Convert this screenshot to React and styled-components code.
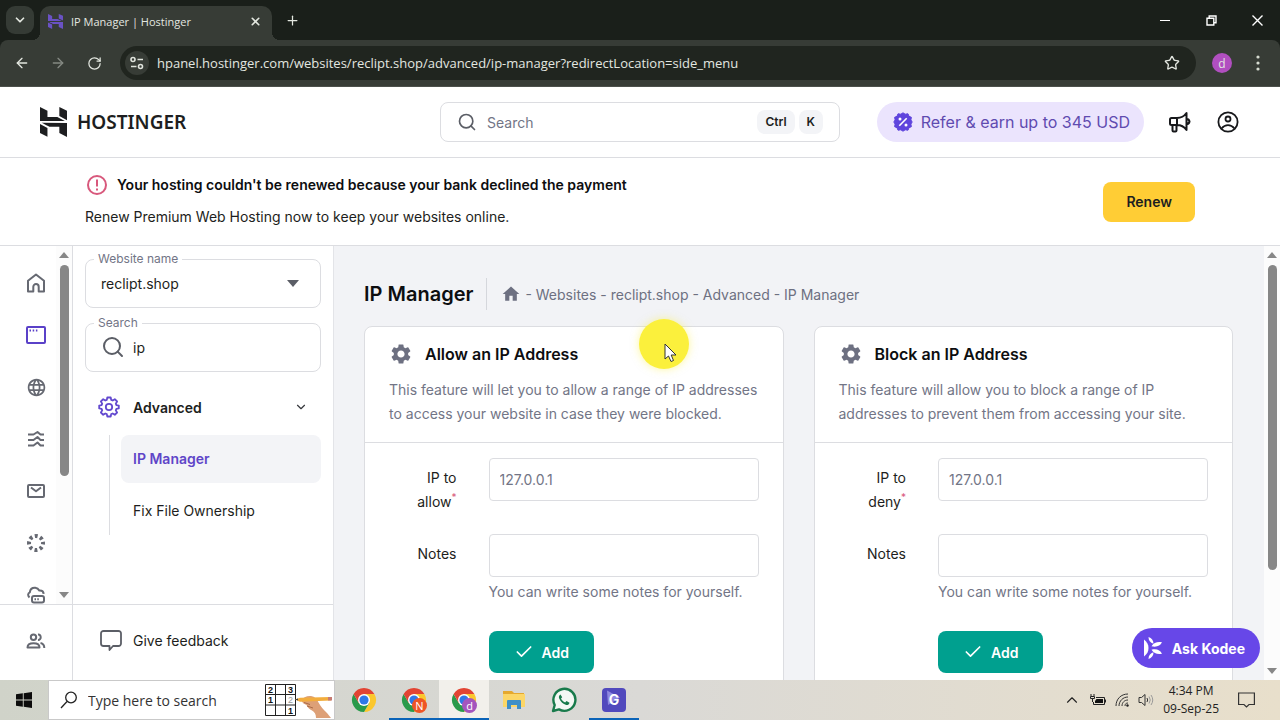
import React from 'react';
import styled, { createGlobalStyle, css } from 'styled-components';
import { MdSettings, MdHome, MdLanguage } from 'react-icons/md';
import {
  ArrowLeft,
  ArrowRight,
  Check,
  ChevronDown,
  ChevronUp,
  Plus,
  RotateCw,
  Search,
  Star,
  X,
} from 'lucide-react';

const uiFont = "Inter, 'Liberation Sans', sans-serif";
const systemFont = "'Open Sans', 'Noto Sans', sans-serif";

const cards = [
  {
    id: 'allow',
    title: 'Allow an IP Address',
    text:
      'This feature will let you to allow a range of IP addresses to access your website in case they were blocked.',
    label: 'IP to allow',
  },
  {
    id: 'deny',
    title: 'Block an IP Address',
    text:
      'This feature will allow you to block a range of IP addresses to prevent them from accessing your site.',
    label: 'IP to deny',
  },
];

function HostingerMark({ width, height, color }) {
  return (
    <svg width={width} height={height} viewBox="1.8 0 20.4 24" fill={color} preserveAspectRatio="none">
      <path d="M16.415 0v7.16l5.785 3.384V2.949L16.415 0ZM1.8 0v11.237h18.815L14.89 8.09l-7.457-.003V3.024L1.8 0Zm14.615 20.894v-5.019l-7.514-.005c.007.033-5.82-3.197-5.82-3.197l19.119.091V24l-5.785-3.106ZM1.8 13.551v7.343l5.633 2.949v-6.988L1.8 13.551Z" />
    </svg>
  );
}

function BrowserChrome() {
  return (
    <StyledBrowser>
      <TitleBar>
        <TabSearchButton aria-label="Search tabs">
          <ChevronDown size={14} strokeWidth={3} />
        </TabSearchButton>
        <Tab>
          <HostingerMark width={15} height={15} color="#6a52c4" />
          <TabTitle>IP Manager | Hostinger</TabTitle>
          <PlainButton aria-label="Close tab">
            <X size={13} strokeWidth={3} />
          </PlainButton>
        </Tab>
        <NewTabButton aria-label="New tab">
          <Plus size={15} strokeWidth={2} />
        </NewTabButton>
        <WindowControls>
          <WindowButton aria-label="Minimize">
            <svg width="10" height="10" stroke="#fff" fill="none">
              <path d="M0 5.5h10" />
            </svg>
          </WindowButton>
          <WindowButton aria-label="Restore">
            <svg width="11" height="11" stroke="#fff" fill="none" strokeWidth="1.4">
              <path d="M1 3.2h6.8V10H1zM3.2 3V1H10v6.8H8" />
            </svg>
          </WindowButton>
          <WindowButton aria-label="Close">
            <svg width="11" height="11" stroke="#fff" fill="none" strokeWidth="1.4">
              <path d="M.5.5l10 10M10.500.5l-10 10" />
            </svg>
          </WindowButton>
        </WindowControls>
      </TitleBar>
      <Toolbar>
        <ToolButton aria-label="Back">
          <ArrowLeft size={16} />
        </ToolButton>
        <ToolButton aria-label="Forward" $dim>
          <ArrowRight size={16} />
        </ToolButton>
        <ToolButton aria-label="Reload">
          <RotateCw size={15} />
        </ToolButton>
        <AddressBar>
          <SiteInfoButton aria-label="Site information">
            <svg width="14" height="14" viewBox="0 0 14 14" fill="none" stroke="#dfe3dc" strokeWidth="1.6">
              <circle cx="3" cy="3.5" r="2" />
              <path d="M7.5 3.5H13M1 10.5h5.5" />
              <circle cx="10.5" cy="10.5" r="2" />
            </svg>
          </SiteInfoButton>
          <AddressInput
            type="text"
            aria-label="Address"
            defaultValue="hpanel.hostinger.com/websites/reclipt.shop/advanced/ip-manager?redirectLocation=side_menu"
          />
          <PlainButton aria-label="Bookmark this tab">
            <Star size={16} strokeWidth={2} />
          </PlainButton>
        </AddressBar>
        <ProfileButton>d</ProfileButton>
        <ToolButton aria-label="Menu">
          <svg width="4" height="16" fill="#d5dbd0">
            <circle cx="2" cy="2" r="1.6" />
            <circle cx="2" cy="8" r="1.6" />
            <circle cx="2" cy="14" r="1.6" />
          </svg>
        </ToolButton>
      </Toolbar>
    </StyledBrowser>
  );
}

function Header() {
  return (
    <StyledHeader>
      <Logo href="#">
        <HostingerMark width={27} height={30} color="#1d1e20" />
        HOSTINGER
      </Logo>
      <HeaderSearch>
        <Search size={20} strokeWidth={2} color="#5b5e66" />
        <HeaderInput type="text" aria-label="Search" placeholder="Search" />
        <Key>Ctrl</Key>
        <Key>K</Key>
      </HeaderSearch>
      <HeaderActions>
        <ReferLink href="#">
          <svg width="20" height="20" viewBox="0 0 20 20">
            <path
              fill="#5f45dd"
              stroke="#5f45dd"
              strokeLinejoin="round"
              d="M10 .8l2.200 1.400L15 1.800l1 2.500 2.400 1-.5 2.600L19.200 10l-1.300 2.100.5 2.600-2.400 1-1 2.500-2.800-.4L10 19.200l-2.200-1.400-2.800.4-1-2.500-2.400-1 .5-2.600L.8 10l1.300-2.100-.5-2.600 2.400-1 1-2.500 2.800.4z"
            />
            <path d="M6.300 13.700l7.400-7.400" stroke="#fff" strokeWidth="1.6" />
            <circle cx="7" cy="7" r="1.5" fill="#fff" />
            <circle cx="13" cy="13" r="1.5" fill="#fff" />
          </svg>
          Refer &amp; earn up to 345 USD
        </ReferLink>
        <PlainButton aria-label="News">
          <svg width="24" height="24" viewBox="0 0 24 24" fill="none" stroke="#17181b" strokeWidth="2" strokeLinejoin="round">
            <path d="M9 8H3.500a1.500 1.500 0 0 0-1.500 1.500v4A1.500 1.500 0 0 0 3.500 15H9zM9 8c4 0 7-1.500 9.500-5v17c-2.500-3.500-5.500-5-9.500-5M4.500 15v5.500a1 1 0 0 0 1 1h2a1 1 0 0 0 1-1V15M18.500 9a3 3 0 0 1 3 2.500 3 3 0 0 1-3 2.500" />
          </svg>
        </PlainButton>
        <PlainButton aria-label="Account">
          <svg width="24" height="24" viewBox="0 0 24 24" fill="none" stroke="#17181b" strokeWidth="1.8">
            <circle cx="12" cy="12" r="9.6" />
            <circle cx="12" cy="9" r="2.500" />
            <path d="M5.500 18.500c2-2.300 4-3.300 6.500-3.300s4.500 1 6.500 3.300" />
          </svg>
        </PlainButton>
      </HeaderActions>
    </StyledHeader>
  );
}

function RenewBanner() {
  return (
    <StyledBanner>
      <BannerBody>
        <BannerTitle>
          <svg width="24" height="24" viewBox="0 0 24 24" fill="none" stroke="#d8587c" strokeWidth="2">
            <circle cx="12" cy="12" r="9" />
            <path d="M12 6.500v7M12 15.500v2" />
          </svg>
          Your hosting couldn't be renewed because your bank declined the payment
        </BannerTitle>
        <span>Renew Premium Web Hosting now to keep your websites online.</span>
      </BannerBody>
      <RenewButton>Renew</RenewButton>
    </StyledBanner>
  );
}

function ScrollBar({ thumb }) {
  return (
    <StyledScrollBar aria-hidden="true">
      <svg width="10" height="6" fill="#878787">
        <path d="M0 6l5-6 5 6z" />
      </svg>
      <ScrollTrack>
        <ScrollThumb style={{ height: thumb }} />
      </ScrollTrack>
      <svg width="10" height="6" fill="#878787">
        <path d="M0 0l5 6 5-6z" />
      </svg>
    </StyledScrollBar>
  );
}

function Rail() {
  return (
    <StyledRail>
      <RailScroll>
        <RailList>
          <RailLink href="#" aria-label="Home">
            <svg width="20" height="20" viewBox="0 0 20 20">
              <path d="M2 18.500V7.800L10 1.500l8 6.300v10.700h-5.300v-4.700a2.700 2.700 0 0 0-5.400 0v4.700z" />
            </svg>
          </RailLink>
          <RailLink href="#" aria-label="Websites" $active>
            <svg width="20" height="18" viewBox="0 0 20 18">
              <rect x="1" y="1" width="18" height="16" rx="1" />
              <path d="M3.500 4.500h1.500M6.700 4.500h1.500M9.900 4.500h1.500" />
            </svg>
          </RailLink>
          <RailLink href="#" aria-label="Domains" $solid>
            <MdLanguage size={21} />
          </RailLink>
          <RailLink href="#" aria-label="Horizons">
            <svg width="18" height="18" viewBox="0 0 18 18">
              <path d="M1 4.500h5.500L10.500 2l3 2.500H17M1 10h5.500l4-3 3 3H17M1 15.500h5.500l4-3 3 3H17" />
            </svg>
          </RailLink>
          <RailLink href="#" aria-label="Emails">
            <svg width="18" height="14" viewBox="0 0 18 14">
              <rect x="1" y="1" width="16" height="12" rx="1" />
              <path d="M4 3.500l5 3.800 5-3.800" />
            </svg>
          </RailLink>
          <RailLink href="#" aria-label="Kodee">
            <svg width="18" height="18" viewBox="0 0 18 18">
              <circle cx="9" cy="9" r="7" strokeDasharray="2.900 2.598" strokeDashoffset="1.450" />
            </svg>
          </RailLink>
          <RailLink href="#" aria-label="VPS">
            <svg width="18" height="18" viewBox="0 0 18 18">
              <path d="M2.500 11.500C.5 9.500.8 7.200 2.800 6.300c.4-3 2.700-4.800 5.500-4.600 2 .2 3.200 1.300 4 2.800 2.500-.2 4.200 1.300 4.400 3.300" />
              <path d="M7 10h8a2 2 0 0 1 2 2v2.500a2 2 0 0 1-2 2H7a2 2 0 0 1-2-2V12a2 2 0 0 1 2-2zM7.500 13.300H9M10.300 13.300h1.500" />
            </svg>
          </RailLink>
        </RailList>
        <ScrollBar thumb="66%" />
      </RailScroll>
      <RailFooter>
        <RailLink href="#" aria-label="Account sharing">
          <svg width="20" height="16" viewBox="0 0 20 16">
            <circle cx="7.500" cy="4.300" r="2.700" />
            <path d="M1.500 14.500c0-3 2.500-4.300 6-4.300s6 1.300 6 4.300zM12 1.500c3.600-.3 3.600 5.700 0 5.500M14.500 10c2.500.5 3.800 2 3.800 5" />
          </svg>
        </RailLink>
      </RailFooter>
    </StyledRail>
  );
}

function SidePanel() {
  return (
    <StyledSidePanel>
      <PanelBody>
        <OutlinedField>
          <FieldLabel htmlFor="website">Website name</FieldLabel>
          <PanelSelect id="website" defaultValue="reclipt.shop">
            <option>reclipt.shop</option>
          </PanelSelect>
          <svg width="12" height="7" fill="#5b5e66">
            <path d="M0 0h12L6 7z" />
          </svg>
        </OutlinedField>
        <OutlinedField>
          <FieldLabel htmlFor="menu-search">Search</FieldLabel>
          <Search size={24} strokeWidth={2} color="#5b5e66" />
          <PanelInput type="text" id="menu-search" defaultValue="ip" />
        </OutlinedField>
        <MenuGroup>
          <svg width="22" height="22" viewBox="0 0 22 22" fill="none" stroke="#6349cf" strokeWidth="1.8" strokeLinejoin="round">
            <path d="M9.300 1.500h3.400l.5 2.400 1.500.6 2.100-1.300 2.300 2.300-1.300 2.100.6 1.500 2.400.5v2.800l-2.400.5-.6 1.500 1.300 2.100-2.300 2.300-2.100-1.300-1.500.6-.5 2.400H9.300l-.5-2.400-1.500-.6-2.100 1.300-2.300-2.300 1.300-2.100-.6-1.500-2.400-.5V9.600l2.400-.5.6-1.500-1.300-2.100 2.300-2.300 2.100 1.300 1.500-.6z" />
            <circle cx="11" cy="11" r="3.200" />
          </svg>
          <span>Advanced</span>
          <ChevronDown size={14} color="#36383d" />
        </MenuGroup>
        <SubMenu>
          <SubLink href="#" $active>
            IP Manager
          </SubLink>
          <SubLink href="#">Fix File Ownership</SubLink>
        </SubMenu>
      </PanelBody>
      <FeedbackButton>
        <svg width="22" height="22" viewBox="0 0 22 22" fill="none" stroke="#5b5e66" strokeWidth="1.8" strokeLinejoin="round">
          <path d="M3.500 1h15A2.500 2.500 0 0 1 21 3.500v10a2.500 2.500 0 0 1-2.500 2.500H13l-3.500 4v-4h-6A2.500 2.500 0 0 1 1 13.500v-10A2.500 2.500 0 0 1 3.500 1z" />
        </svg>
        Give feedback
      </FeedbackButton>
    </StyledSidePanel>
  );
}

function IpCard({ card }) {
  return (
    <Card>
      <CardHeader>
        <CardTitle>
          <MdSettings size={24} color="#6d7081" />
          {card.title}
        </CardTitle>
        <CardText>{card.text}</CardText>
      </CardHeader>
      <CardForm>
        <FormRow>
          <FormLabel htmlFor={`${card.id}-ip`}>
            {card.label}
            <Required>*</Required>
          </FormLabel>
          <TextInput type="text" id={`${card.id}-ip`} placeholder="127.0.0.1" />
        </FormRow>
        <FormRow>
          <FormLabel htmlFor={`${card.id}-notes`}>Notes</FormLabel>
          <div>
            <TextInput type="text" id={`${card.id}-notes`} />
            <Hint>You can write some notes for yourself.</Hint>
          </div>
        </FormRow>
        <FormRow>
          <span />
          <div>
            <AddButton type="button">
              <Check size={20} strokeWidth={2} />
              Add
            </AddButton>
          </div>
        </FormRow>
      </CardForm>
    </Card>
  );
}

function Content() {
  return (
    <StyledContent>
      <ContentBody>
        <PageHead>
          <PageTitle>IP Manager</PageTitle>
          <Breadcrumbs>
            <MdHome size={20} />
            <span>- Websites - reclipt.shop - Advanced - IP Manager</span>
          </Breadcrumbs>
        </PageHead>
        <CardGrid>
          {cards.map((card) => (
            <IpCard key={card.id} card={card} />
          ))}
        </CardGrid>
      </ContentBody>
      <ScrollBar thumb="77%" />
      <KodeeButton>
        <svg width="18" height="22" viewBox="0 0 18 22" fill="#fff">
          <path d="M0 2.500c3.200 2.500 4.500 5 4.500 8.500S3.200 17 0 19.500z" />
          <path d="M4.500 0c3.200 1.200 5 3.200 5 6.800-3.200-1-5-3.200-5-6.800zM4.500 22c3.200-1.200 5-3.200 5-6.800-3.200 1-5 3.200-5 6.800z" />
          <path d="M7.500 9.300C10 5.500 13.500 4.500 18 5.300c-1.800 3.700-5.500 5.200-10.500 4zM7.500 12.700c2.500 3.800 6 4.800 10.500 4-1.800-3.700-5.500-5.200-10.500-4z" />
        </svg>
        Ask Kodee
      </KodeeButton>
    </StyledContent>
  );
}

function Pointer() {
  return (
    <StyledPointer aria-hidden="true">
      <svg width="14" height="20" viewBox="0 0 14 20" fill="#fff" stroke="#333" strokeWidth="1">
        <path d="M1 1v15l3.500-3 2.500 5.500 2.500-1L7.200 12H12z" />
      </svg>
    </StyledPointer>
  );
}

function ChromeIcon({ badge, badgeColor }) {
  return (
    <svg width="26" height="26" viewBox="-1 -1 26 26">
      <path d="M12 12V6h10.400A12 12 0 0 1 12 24l5.200-9z" fill="#fbc72d" />
      <path d="M12 12l5.200 3L12 24A12 12 0 0 1 1.600 6l5.200 9z" fill="#2a9a4b" />
      <path d="M1.600 6A12 12 0 0 1 22.400 6H12L6.800 15z" fill="#e24433" />
      <circle cx="12" cy="12" r="6" fill="#fff" />
      <circle cx="12" cy="12" r="4.600" fill="#2f78e8" />
      {badge && (
        <>
          <circle cx="17.500" cy="17.500" r="7.500" fill={badgeColor} />
          <text x="17.500" y="21.500" fontSize="11" fill="#fff" textAnchor="middle" fontFamily="Open Sans">
            {badge}
          </text>
        </>
      )}
    </svg>
  );
}

function Taskbar() {
  return (
    <StyledTaskbar>
      <StartButton aria-label="Start">
        <svg width="16" height="16" viewBox="0 0 16 16" fill="#0b0b0b">
          <path d="M0 2.200l6.800-.9v6.300H0zM7.700 1.200L16 0v7.600H7.700zM0 8.400h6.800v6.300L0 13.800zM7.700 8.400H16V16l-8.300-1.200z" />
        </svg>
      </StartButton>
      <TaskSearch>
        <svg width="18" height="18" viewBox="0 0 18 18" fill="none" stroke="#222" strokeWidth="1.3">
          <circle cx="11" cy="6.500" r="5.300" />
          <path d="M7 10.500L1 17" />
        </svg>
        <TaskInput type="text" aria-label="Type here to search" placeholder="Type here to search" />
        <svg width="70" height="36" viewBox="0 0 70 36" fill="none">
          <path d="M1.500 2.500h30v31h-30zM11.500 2.500v31M21.500 2.500v31M1.500 12.500h30M1.500 23h30" stroke="#222" />
          <g fontSize="9" fill="#111" fontFamily="Liberation Sans" fontWeight="700">
            <text x="4" y="11">2</text>
            <text x="24" y="11">3</text>
            <text x="4" y="21">1</text>
            <text x="24" y="32">1</text>
          </g>
          <text x="24" y="21" fontSize="9" fill="#999" fontFamily="Liberation Sans">
            2
          </text>
          <path d="M37 18.500c2-3 6-5 10-4.500 4 .5 6 3 7.500 6.500 2 4 5 7 8.500 10.500l4 5H52c0-4-1.500-6-4-7.500-2.500-1.300-4.500-3-5.500-5.500l-3-1.500z" fill="#dda077" />
          <path d="M40 20.500l6 2M43 24l6 2" stroke="#a86a48" />
          <path d="M31 17.500l5-1.800 31-.7v3.500l-31 1.200z" fill="#f2ad3d" />
          <path d="M31 17.500l3-1v2z" fill="#444" />
          <path d="M64 15.100l4-.1v3.400l-4 .2z" fill="#c67b72" />
        </svg>
      </TaskSearch>
      <TaskApps>
        <TaskApp aria-label="Chrome">
          <ChromeIcon />
        </TaskApp>
        <TaskApp aria-label="Chrome profile N" $running>
          <ChromeIcon badge="N" badgeColor="#ee5526" />
        </TaskApp>
        <TaskApp aria-label="Chrome profile d" $running $active>
          <ChromeIcon badge="d" badgeColor="#a455bd" />
        </TaskApp>
        <TaskApp aria-label="File Explorer">
          <svg width="22" height="20" viewBox="0 0 22 20">
            <path d="M0 1h9l2 2h10v14H0z" fill="#e5a82e" />
            <path d="M0 4h22v13H0z" fill="#fcd667" />
            <path d="M4 19v-8a1 1 0 0 1 1-1h12a1 1 0 0 1 1 1v8h-4v-4H8v4z" fill="#3f8fc8" />
          </svg>
        </TaskApp>
        <TaskApp aria-label="WhatsApp">
          <svg width="26" height="26" viewBox="0 0 26 26">
            <path d="M2 24l1.700-6A11 11 0 1 1 8 22.400z" fill="#f4f8f4" stroke="#187a4b" strokeWidth="2.4" strokeLinejoin="round" />
            <path d="M9.500 7.500c-1.500.8-2 2.300-1.300 4 1.300 3.300 4 5.700 7 6.500 1.500.3 3-.6 3.300-2.300l-3-1.700-1.300 1.500c-2-.8-3.400-2.200-4.200-4l1.200-1.300z" fill="#187a4b" />
          </svg>
        </TaskApp>
        <TaskApp aria-label="G" $running>
          <svg width="24" height="24" viewBox="0 0 24 24">
            <rect width="24" height="24" rx="4" fill="#5149bd" />
            <path d="M5 2.500l13 7L6 17z" fill="#8f88e0" />
            <text x="12" y="17" fontSize="14" fontWeight="700" fill="#fff" textAnchor="middle" fontFamily="Inter">
              G
            </text>
          </svg>
        </TaskApp>
      </TaskApps>
      <Tray>
        <PlainButton aria-label="Show hidden icons">
          <ChevronUp size={18} strokeWidth={1.5} />
        </PlainButton>
        <svg width="16" height="12" viewBox="0 0 16 12" fill="none" stroke="#222">
          <path d="M6 3.500h8.500v7h-11V8M15.500 5.500v3" />
          <path d="M6.500 5h6.500v4H5V7z" fill="#111" stroke="none" />
          <path d="M1 0v2M4 0v2M.5 2.500h4v2h-4zM2.500 5v3" />
        </svg>
        <svg width="14" height="14" viewBox="0 0 14 14" fill="none" stroke="#333">
          <path d="M1 13C1 6 6 1 13 1M4 13c0-5 4-9 9-9M7 13c0-3.500 2.500-6 6-6M10 13c0-2 1-3 3-3" />
          <circle cx="12.500" cy="12.500" r="1.200" fill="#222" stroke="none" />
        </svg>
        <svg width="16" height="14" viewBox="0 0 16 14" fill="none" stroke="#333">
          <path d="M1 4.500h2.500L7 1.500v11l-3.500-3H1z" />
          <path d="M9 5q1.300 2 0 4" />
          <path d="M11 3.500q2.500 3.500 0 7M13 2q3.500 5 0 10" stroke="#999" />
        </svg>
        <Clock>
          <span>4:34 PM</span>
          <span>09-Sep-25</span>
        </Clock>
        <PlainButton aria-label="Notifications">
          <svg width="17" height="17" viewBox="0 0 17 17" fill="none" stroke="#333" strokeWidth="1.2">
            <path d="M.6 1h15.800v11.500H11L8.500 15 6 12.500H.6z" />
          </svg>
        </PlainButton>
      </Tray>
    </StyledTaskbar>
  );
}

function App() {
  return (
    <Desktop>
      <GlobalStyle />
      <BrowserChrome />
      <Header />
      <RenewBanner />
      <Workspace>
        <Rail />
        <SidePanel />
        <Content />
      </Workspace>
      <Taskbar />
      <Pointer />
    </Desktop>
  );
}

const GlobalStyle = createGlobalStyle`
  * {
    box-sizing: border-box;
  }

  body {
    margin: 0;
    font-family: ${uiFont};
    font-size: 14px;
    color: #1d1e20;
  }

  button,
  input,
  select {
    font: inherit;
    color: inherit;
  }

  svg {
    display: block;
    flex-shrink: 0;
  }
`;

const Desktop = styled.div`
  position: relative;
  display: flex;
  flex-direction: column;
  height: 100vh;
  background: #fff;
  overflow: hidden;
`;

const PlainButton = styled.button`
  display: flex;
  align-items: center;
  justify-content: center;
  padding: 0;
  border: none;
  background: none;
  cursor: pointer;
`;

/* browser window */

const StyledBrowser = styled.div`
  background: #1a1f1a;
  color: #e3e7e0;
  font-family: ${systemFont};
`;

const TitleBar = styled.div`
  display: flex;
  align-items: flex-end;
  height: 40px;
  padding-left: 6px;
`;

const TabSearchButton = styled(PlainButton)`
  width: 28px;
  height: 28px;
  margin: 0 6px 6px 0;
  border-radius: 9px;
  background: #353b35;
`;

const Tab = styled.div`
  position: relative;
  display: flex;
  align-items: center;
  gap: 8px;
  width: 232px;
  height: 34px;
  padding: 0 10px 4px 8px;
  border-radius: 10px 10px 0 0;
  background: #373c36;

  &::before,
  &::after {
    content: '';
    position: absolute;
    bottom: 0;
    width: 8px;
    height: 8px;
  }

  &::before {
    left: -8px;
    background: radial-gradient(circle at 0 0, transparent 8px, #373c36 8px);
  }

  &::after {
    right: -8px;
    background: radial-gradient(circle at 100% 0, transparent 8px, #373c36 8px);
  }
`;

const TabTitle = styled.span`
  flex: 1;
  font-size: 11px;
`;

const NewTabButton = styled(PlainButton)`
  width: 40px;
  height: 40px;
`;

const WindowControls = styled.div`
  display: flex;
  margin-left: auto;
`;

const WindowButton = styled(PlainButton)`
  width: 46px;
  height: 40px;
`;

const Toolbar = styled.div`
  display: flex;
  align-items: center;
  height: 47px;
  padding: 0 4px;
  border-bottom: 1px solid #4c504b;
  border-radius: 8px 8px 0 0;
  background: #373c36;
`;

const ToolButton = styled(PlainButton)`
  width: 36px;
  height: 36px;
  opacity: ${({ $dim }) => ($dim ? 0.45 : 1)};
`;

const AddressBar = styled.div`
  flex: 1;
  display: flex;
  align-items: center;
  height: 34px;
  margin: 0 16px 0 8px;
  padding: 0 16px 0 5px;
  border-radius: 17px;
  background: #20251f;
`;

const SiteInfoButton = styled(PlainButton)`
  width: 24px;
  height: 24px;
  border-radius: 12px;
  background: #373c36;
`;

const AddressInput = styled.input`
  flex: 1;
  min-width: 0;
  padding: 0 8px;
  border: none;
  background: none;
  font-size: 13px;
  outline: none;
`;

const ProfileButton = styled(PlainButton)`
  width: 20px;
  height: 20px;
  margin-right: 8px;
  border-radius: 10px;
  background: #b14fc0;
  font-size: 12px;
`;

/* hPanel header */

const StyledHeader = styled.header`
  display: grid;
  grid-template-columns: 1fr 400px 1fr;
  align-items: center;
  height: 71px;
  padding: 0 40px;
  border-bottom: 1px solid #dcdde1;
`;

const Logo = styled.a`
  display: flex;
  align-items: center;
  gap: 10px;
  color: #1d1e20;
  font-family: 'Noto Sans', sans-serif;
  font-size: 19px;
  font-weight: 600;
  text-decoration: none;
`;

const HeaderSearch = styled.div`
  display: flex;
  align-items: center;
  height: 40px;
  padding: 0 16px;
  border: 1px solid #dcdde1;
  border-radius: 8px;
`;

const HeaderInput = styled.input`
  flex: 1;
  min-width: 0;
  padding: 0 10px;
  border: none;
  outline: none;

  &::placeholder {
    color: #727586;
  }
`;

const Key = styled.kbd`
  padding: 4px 8px;
  margin-left: 4px;
  border-radius: 8px;
  background: #f3f4f7;
  font-family: inherit;
  font-size: 12px;
  font-weight: 600;
  line-height: 16px;
`;

const HeaderActions = styled.div`
  display: flex;
  align-items: center;
  justify-content: flex-end;
  gap: 24px;
`;

const ReferLink = styled.a`
  display: flex;
  align-items: center;
  gap: 8px;
  height: 40px;
  padding: 0 14px 0 16px;
  border-radius: 20px;
  background: #ebe4fd;
  color: #5f4bb0;
  font-size: 16px;
  text-decoration: none;
  white-space: nowrap;
`;

const StyledBanner = styled.section`
  display: flex;
  align-items: center;
  justify-content: space-between;
  height: 88px;
  padding: 0 85px;
  border-bottom: 1px solid #dcdde1;
`;

const BannerBody = styled.div`
  display: flex;
  flex-direction: column;
  gap: 8px;
  padding-bottom: 1px;
  line-height: 24px;
`;

const BannerTitle = styled.strong`
  display: flex;
  align-items: center;
  gap: 8px;
  color: #0d0e10;
  font-weight: 600;
`;

const RenewButton = styled.button`
  height: 40px;
  padding: 0 23px;
  border: none;
  border-radius: 8px;
  background: #ffcd35;
  font-weight: 600;
  cursor: pointer;
`;

/* workspace */

const Workspace = styled.div`
  flex: 1;
  display: flex;
  min-height: 0;
`;

const StyledScrollBar = styled.div`
  display: flex;
  flex-direction: column;
  align-items: center;
  gap: 7px;
  width: 16px;
  padding: 6px 0;
  background: #fcfcfc;
`;

const ScrollTrack = styled.div`
  flex: 1;
`;

const ScrollThumb = styled.div`
  width: 9px;
  border-radius: 5px;
  background: #878787;
`;

const StyledRail = styled.nav`
  display: flex;
  flex-direction: column;
  width: 73px;
  border-right: 1px solid #dcdde1;
`;

const RailScroll = styled.div`
  flex: 1;
  display: flex;
  justify-content: space-between;
  min-height: 0;
  padding-left: 16px;
`;

const RailList = styled.div`
  padding-top: 11px;
  overflow: hidden;
`;

const RailLink = styled.a`
  display: flex;
  align-items: center;
  justify-content: center;
  width: 40px;
  height: 52px;
  color: ${({ $active }) => ($active ? '#5a41c8' : '#666972')};

  ${({ $solid }) =>
    !$solid &&
    css`
      svg {
        fill: none;
        stroke: currentColor;
        stroke-width: 2;
        stroke-linejoin: round;
      }
    `}

  circle[stroke-dasharray] {
    stroke-width: 4;
  }
`;

const RailFooter = styled.div`
  height: 76px;
  padding: 10px 16px;
  border-top: 1px solid #dcdde1;
`;

const StyledSidePanel = styled.aside`
  display: flex;
  flex-direction: column;
  width: 261px;
  border-right: 1px solid #e3e4e8;
`;

const PanelBody = styled.div`
  flex: 1;
  padding: 13px 12px 0;
`;

const OutlinedField = styled.div`
  position: relative;
  display: flex;
  align-items: center;
  gap: 8px;
  height: 49px;
  margin-bottom: 15px;
  padding: 0 21px 1px 15px;
  border: 1px solid #dcdde1;
  border-radius: 8px;
`;

const FieldLabel = styled.label`
  position: absolute;
  top: -8px;
  left: 8px;
  padding: 0 4px;
  background: #fff;
  color: #727586;
  font-size: 12px;
  line-height: 14px;
`;

const fieldControl = css`
  flex: 1;
  min-width: 0;
  padding: 0;
  border: none;
  outline: none;
  background: none;
`;

const PanelSelect = styled.select`
  ${fieldControl}
  appearance: none;
`;

const PanelInput = styled.input`
  ${fieldControl}
`;

const MenuGroup = styled.button`
  display: flex;
  align-items: center;
  gap: 13px;
  width: 100%;
  height: 40px;
  padding: 0 13px;
  border: none;
  background: none;
  font-weight: 600;
  text-align: left;
  cursor: pointer;

  span {
    flex: 1;
  }
`;

const SubMenu = styled.div`
  display: flex;
  flex-direction: column;
  gap: 4px;
  margin: 8px 0 0 24px;
  padding-left: 11px;
  border-left: 1px solid #dcdde1;
`;

const SubLink = styled.a`
  padding: 0 12px;
  border-radius: 8px;
  background: ${({ $active }) => ($active ? '#f3f4f7' : 'none')};
  color: ${({ $active }) => ($active ? '#5f45c8' : '#1d1e20')};
  font-weight: ${({ $active }) => ($active ? 600 : 400)};
  line-height: 48px;
  text-decoration: none;
`;

const FeedbackButton = styled.button`
  display: flex;
  align-items: center;
  gap: 11px;
  height: 76px;
  padding: 0 27px 4px;
  border: none;
  border-top: 1px solid #dcdde1;
  background: none;
  cursor: pointer;
`;

/* page content */

const StyledContent = styled.main`
  position: relative;
  flex: 1;
  display: flex;
  min-width: 0;
  background: #f2f3f6;
`;

const ContentBody = styled.div`
  flex: 1;
  padding: 32px 31px 0 30px;
  overflow: hidden;
`;

const PageHead = styled.div`
  display: flex;
  align-items: center;
  height: 32px;
  margin-bottom: 16px;
`;

const PageTitle = styled.h1`
  margin: 0;
  padding-right: 13px;
  border-right: 1px solid #d5d7dc;
  color: #0d0e10;
  font-size: 20px;
  font-weight: 600;
  line-height: 32px;
`;

const Breadcrumbs = styled.nav`
  display: flex;
  align-items: center;
  gap: 4px;
  padding-left: 14px;
  color: #6d7081;
`;

const CardGrid = styled.div`
  display: grid;
  grid-template-columns: 1fr 1fr;
  gap: 30px;
`;

const Card = styled.section`
  border: 1px solid #dcdde1;
  border-radius: 8px;
  background: #fff;
`;

const CardHeader = styled.div`
  padding: 15px 24px 16px;
  border-bottom: 1px solid #dcdde1;
`;

const CardTitle = styled.h2`
  display: flex;
  align-items: center;
  gap: 12px;
  margin: 0 0 12px;
  color: #0d0e10;
  font-size: 16px;
  font-weight: 600;
  line-height: 24px;
`;

const CardText = styled.p`
  margin: 0;
  color: #727586;
  line-height: 24px;
`;

const CardForm = styled.form`
  padding: 15px 24px 24px;
`;

const FormRow = styled.div`
  display: grid;
  grid-template-columns: 1fr 4fr;
  column-gap: 32px;
  align-items: start;
  margin-bottom: 20px;
`;

const FormLabel = styled.label`
  padding-top: 8px;
  line-height: 24px;
  text-align: right;
`;

const Required = styled.sup`
  color: #d8587c;
  font-size: 10px;
  line-height: 0;
`;

const TextInput = styled.input`
  width: 100%;
  height: 43px;
  padding: 0 10px;
  border: 1px solid #dcdde1;
  border-radius: 4px;

  &::placeholder {
    color: #727586;
  }
`;

const Hint = styled.p`
  margin: 3px 0 7px;
  color: #727586;
  line-height: 24px;
`;

const AddButton = styled.button`
  display: flex;
  align-items: center;
  gap: 8px;
  height: 42px;
  padding: 0 25px;
  border: none;
  border-radius: 8px;
  background: #00a08f;
  color: #fff;
  font-weight: 600;
  cursor: pointer;
`;

const KodeeButton = styled.button`
  position: absolute;
  right: 20px;
  bottom: 12px;
  display: flex;
  align-items: center;
  gap: 10px;
  height: 40px;
  padding: 0 15px 0 12px;
  border: none;
  border-radius: 20px;
  background: #6747e8;
  color: #fff;
  font-weight: 700;
  cursor: pointer;
`;

const StyledPointer = styled.div`
  position: absolute;
  top: 319px;
  left: 639px;
  width: 50px;
  height: 50px;
  padding: 24px 0 0 25px;
  border-radius: 50%;
  background: #fbf03c;
  box-shadow: 0 0 8px rgba(251, 240, 60, 0.5);
  pointer-events: none;
`;

/* taskbar */

const StyledTaskbar = styled.footer`
  display: flex;
  height: 40px;
  background: linear-gradient(90deg, #d0d3c9, #dad9d6 50%, #e8dfcb);
  color: #222;
  font-family: ${systemFont};
`;

const StartButton = styled(PlainButton)`
  width: 48px;
`;

const TaskSearch = styled.div`
  display: flex;
  align-items: center;
  width: 287px;
  padding-left: 11px;
  border: 1px solid #c9c9c9;
  background: #fff;
`;

const TaskInput = styled.input`
  flex: 1;
  min-width: 0;
  padding: 0 10px;
  border: none;
  outline: none;
  background: none;

  &::placeholder {
    color: #333;
  }
`;

const TaskApps = styled.div`
  display: flex;
  margin-left: 4px;
`;

const TaskApp = styled(PlainButton)`
  width: 50px;
  padding-top: 2px;
  border-bottom: 2px solid ${({ $running }) => ($running ? '#0a63b8' : 'transparent')};
  background: ${({ $active }) => ($active ? '#f2f0eb' : 'none')};
`;

const Tray = styled.div`
  display: flex;
  align-items: center;
  gap: 9px;
  margin-left: auto;
  padding-right: 25px;
`;

const Clock = styled.div`
  display: flex;
  flex-direction: column;
  align-items: center;
  margin: 0 10px 0 0;
  font-size: 12px;
  line-height: 18px;
`;

export default App;
